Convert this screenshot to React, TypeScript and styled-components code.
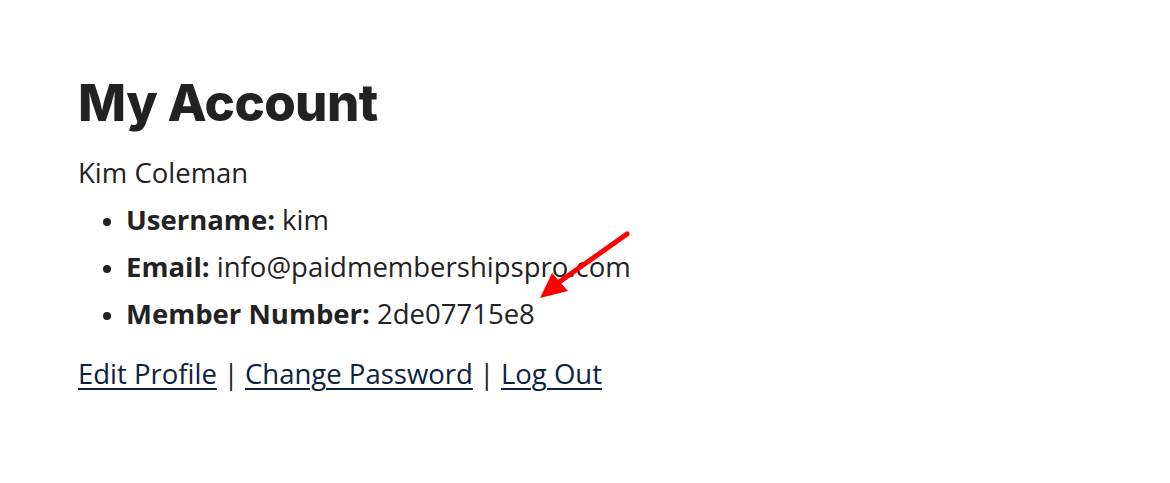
import React from "react";
import styled, { createGlobalStyle } from "styled-components";

const Global = createGlobalStyle`
  html, body { margin: 0; padding: 0; background: #fff; }
  body { font-family: "Open Sans", "Noto Sans", sans-serif; color: #222; }
`;

const Page = styled.div`
  position: relative;
  width: 1170px;
  height: 483px;
  padding: 72px 0 0 78px;
  box-sizing: border-box;
`;

const Title = styled.h1`
  font-family: Inter, "Noto Sans", sans-serif;
  font-weight: 800;
  font-size: 51px;
  letter-spacing: -0.6px;
  line-height: 62px;
  margin: 0 0 21px;
  color: #222;
`;

const Name = styled.div`
  font-size: 27.5px;
  line-height: 36px;
`;

const List = styled.ul`
  margin: 5px 0 17px;
  padding-left: 48px;
  font-size: 27.5px;
  line-height: 47px;
  li::marker { font-size: 22px; }
`;

const Label = styled.strong`
  font-weight: 700;
`;

const Links = styled.div`
  font-size: 27.5px;
  line-height: 40px;
  color: #222;
`;

const Link = styled.a`
  color: #0c2340;
  text-decoration: underline;
  text-underline-offset: 4px;
  text-decoration-thickness: 2px;
`;

const Sep = styled.span`
  margin: 0 6.5px;
`;

const Arrow = styled.svg`
  position: absolute;
  left: 530px;
  top: 225px;
`;

export default function App() {
  return (
    <>
      <Global />
      <Page>
        <Title>My Account</Title>
        <Name>Kim Coleman</Name>
        <List>
          <li><Label>Username:</Label> kim</li>
          <li><Label>Email:</Label> info@paidmembershipspro.com</li>
          <li><Label>Member Number:</Label> 2de07715e8</li>
        </List>
        <Links>
          <Link href="#">Edit Profile</Link>
          <Sep>|</Sep>
          <Link href="#">Change Password</Link>
          <Sep>|</Sep>
          <Link href="#">Log Out</Link>
        </Links>
        <Arrow width="110" height="85" viewBox="0 0 110 85">
          <line x1="97" y1="9" x2="25" y2="60" stroke="#f00" strokeWidth="5" strokeLinecap="round" />
          <polygon points="10,73 22,48 38,66" fill="#f00" />
        </Arrow>
      </Page>
    </>
  );
}
